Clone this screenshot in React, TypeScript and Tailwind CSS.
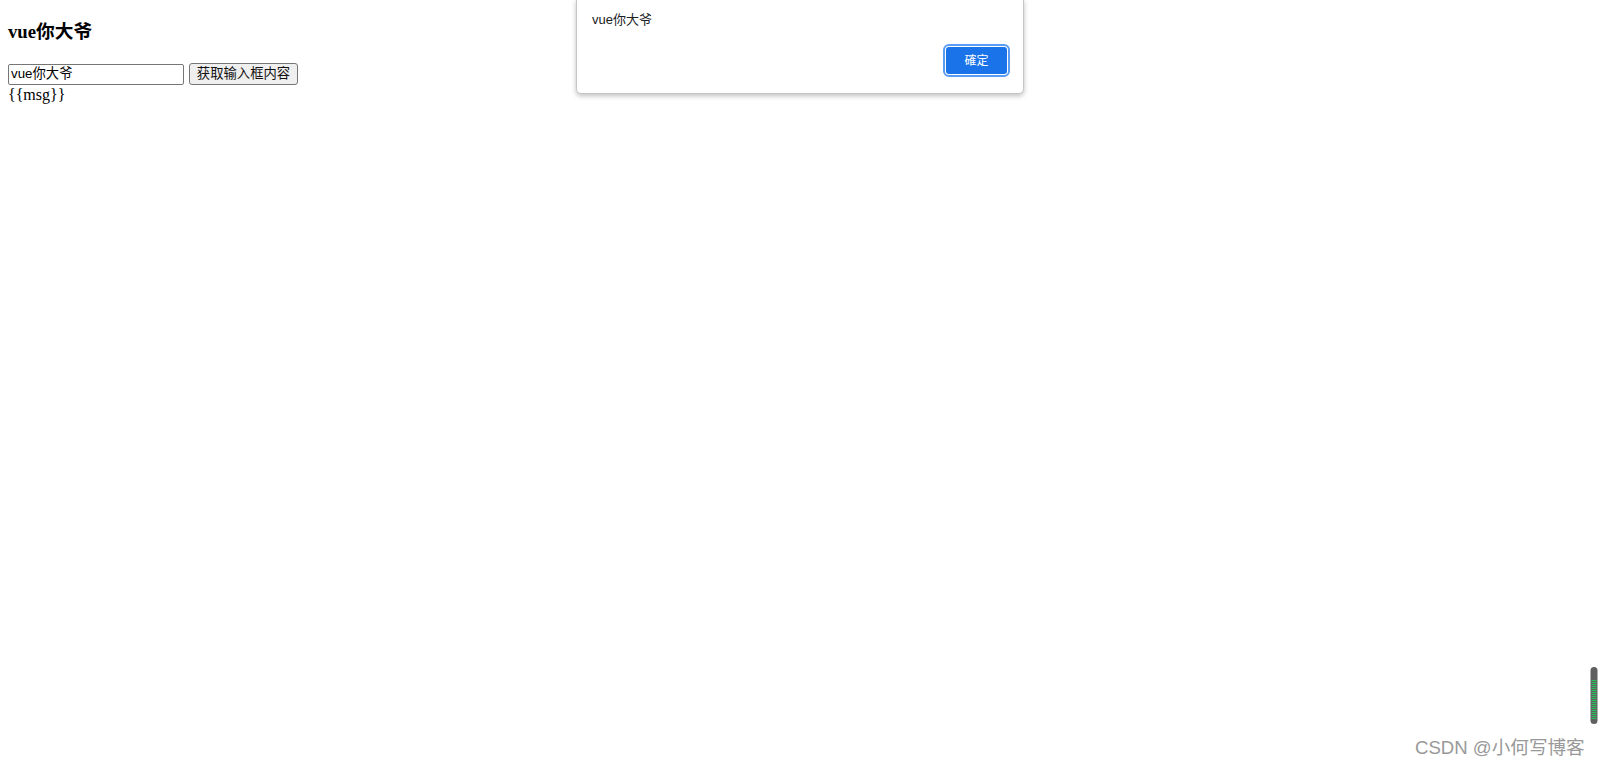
export default function App() {
  return (
    <div className="relative h-[767px] w-full overflow-hidden bg-white text-black">
      {/* page body */}
      <div className="px-2 pt-[20.5px] font-['Liberation_Serif','Noto_Sans_CJK_SC',serif] text-base">
        <h3 className="mb-[21px] text-[18.72px] font-bold leading-[21.5px]">vue你大爷</h3>
        <div className="flex items-center gap-[5px] leading-[22px]">
          <input
            className="box-border h-[21px] w-[176px] rounded-[2px] border border-[#767676] px-[2px] font-['Liberation_Sans','Noto_Sans_CJK_SC',sans-serif] text-[13.33px] outline-none"
            defaultValue="vue你大爷"
          />
          <button className="box-border h-[22px] w-[109px] rounded-[3px] border border-[#767676] bg-[#efefef] px-[6px] font-['Liberation_Sans','Noto_Sans_CJK_SC',sans-serif] text-[13.33px] leading-none text-[#111]">
            获取输入框内容
          </button>
        </div>
        <div className="leading-[19px]">{"{{msg}}"}</div>
      </div>

      {/* alert dialog */}
      <div className="absolute left-[576px] top-[-1px] box-border h-[95px] w-[448px] rounded-b-[5px] border border-[#c6c6c6] bg-white shadow-[0_2px_5px_rgba(0,0,0,0.25)] font-['Liberation_Sans','Noto_Sans_CJK_SC',sans-serif]">
        <div className="pl-[15px] pt-[12px] text-[13px] leading-[16px] text-[#202124]">vue你大爷</div>
        <div className="mt-[16px] flex justify-end pr-[13px]">
          <div className="box-border h-[33px] w-[67px] rounded-[6px] border-2 border-[#5a9bf3] bg-white p-[1px]">
            <div className="flex h-full w-full items-center justify-center rounded-[3px] bg-[#1a73e8] text-[12px] text-white">
              確定
            </div>
          </div>
        </div>
      </div>

      {/* scroll indicator */}
      <svg className="absolute left-[1590px] top-[667px]" width="8" height="57" viewBox="0 0 8 57">
        <rect x="0.5" y="0" width="7" height="57" rx="3.5" fill="#5f5f5f" />
        {Array.from({ length: 20 }).map((_, i) => (
          <rect key={i} x="1.5" y={13 + i * 2} width="5" height="1" fill="#27c25a" />
        ))}
      </svg>

      {/* watermark */}
      <div className="absolute left-[1415px] top-[737px] font-['Liberation_Sans','Noto_Sans_CJK_SC',sans-serif] text-[18.6px] leading-[22px] text-[#999] [text-shadow:0_0_2px_#fff]">
        CSDN @小何写博客
      </div>
    </div>
  );
}
